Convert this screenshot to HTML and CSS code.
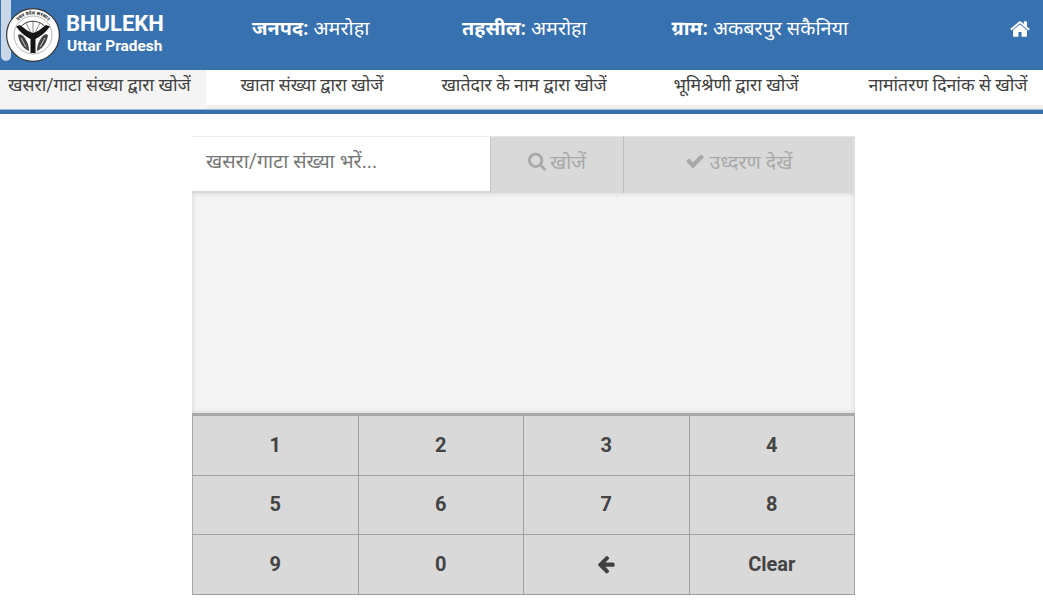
FILE: index.html
```html
<!DOCTYPE html>
<html lang="hi">
<head>
<meta charset="utf-8">
<title>Bhulekh</title>
<link rel="stylesheet" href="styles.css">
</head>
<body>
<header class="topbar">
  <span class="scroll-thumb"></span>
  <div class="brand">
    <svg class="logo" viewBox="0 0 54 54" aria-hidden="true">
      <defs><path id="ring" d="M7 32 A20.600 20.600 0 1 1 47 32"/></defs>
      <circle cx="27" cy="27" r="26.400" fill="#fff" stroke="#333" stroke-width="1.200"/>
      <circle cx="27" cy="27" r="19" fill="none" stroke="#666" stroke-width=".5"/>
      <text class="logo-text"><textPath href="#ring" startOffset="50%" text-anchor="middle">उत्तर प्रदेश सरकार</textPath></text>
      <path d="M14 20 C20 11 34 11 40 20" fill="none" stroke="#333" stroke-width="1"/>
      <path d="M27 13 L27 26 M20 15 L25 25 M34 15 L29 25" fill="none" stroke="#555" stroke-width=".7"/>
      <path d="M10 18.500 L14 17 C19 21 23 24 27 25 C31 24 35 21 40 17 L44 18.500 C39 25 34 29 29.500 31 L29.500 45 L24.500 45 L24.500 31 C20 29 15 25 10 18.500 Z" fill="#161616"/>
      <path d="M12 27 C15 25 18 28 20 32 C22 35 23 39 23 43 C18 41 13 35 12 27 Z M42 27 C39 25 36 28 34 32 C32 35 31 39 31 43 C36 41 41 35 42 27 Z" fill="#444"/>
      <path d="M15 30 L20 39 M39 30 L34 39" stroke="#e4e4e4" stroke-width=".8" fill="none"/>
    </svg>
    <div class="brand-text">
      <div class="brand-title">BHULEKH</div>
      <div class="brand-sub">Uttar Pradesh</div>
    </div>
  </div>
  <div class="info"><b>जनपद:</b> अमरोहा</div>
  <div class="info"><b>तहसील:</b> अमरोहा</div>
  <div class="info"><b>ग्राम:</b> अकबरपुर सकैनिया</div>
  <svg class="home" viewBox="0 0 1664 1792" aria-hidden="true"><path fill="#fff" d="M1408 992v480q0 26-19 45t-45 19h-384v-384h-256v384h-384q-26 0-45-19t-19-45v-480q0-1 .5-3t.5-3l575-474 575 474q1 2 1 6zm223-69l-62 74q-8 9-21 11h-3q-13 0-21-7l-692-577-692 577q-12 8-24 7-13-2-21-11l-62-74q-8-10-7-23.500t11-21.500l719-599q32-26 76-26t76 26l244 204v-195q0-14 9-23t23-9h192q14 0 23 9t9 23v408l219 182q10 8 11 21.500t-7 23.500z"/></svg>
</header>
<nav class="tabs">
  <a class="tab tab-active">खसरा/गाटा संख्या द्वारा खोजें</a>
  <a class="tab">खाता संख्या द्वारा खोजें</a>
  <a class="tab">खातेदार के नाम द्वारा खोजें</a>
  <a class="tab">भूमिश्रेणी द्वारा खोजें</a>
  <a class="tab">नामांतरण दिनांक से खोजें</a>
</nav>
<main class="panel">
  <div class="search-row">
    <div class="search-input">खसरा/गाटा संख्या भरें...</div>
    <div class="btn btn-search">
      <svg class="ic-search" viewBox="0 0 1664 1792" aria-hidden="true"><path fill="#a9a9a9" d="M1152 832q0-185-131.500-316.500t-316.500-131.500-316.500 131.500-131.500 316.500 131.500 316.500 316.500 131.500 316.500-131.500 131.500-316.500zm512 832q0 52-38 90t-90 38q-54 0-90-38l-343-342q-179 124-399 124-143 0-273.500-55.500t-225-150-150-225-55.500-273.500 55.500-273.500 150-225 225-150 273.500-55.500 273.500 55.500 225 150 150 225 55.500 273.500q0 220-124 399l343 343q37 37 37 90z"/></svg>
      <span>खोजें</span>
    </div>
    <div class="btn btn-view">
      <svg class="ic-check" viewBox="0 0 1792 1792" aria-hidden="true"><path fill="#a9a9a9" d="M1671 566q0 40-28 68l-724 724-136 136q-28 28-68 28t-68-28l-136-136-362-362q-28-28-28-68t28-68l136-136q28-28 68-28t68 28l294 295 656-657q28-28 68-28t68 28l136 136q28 28 28 68z"/></svg>
      <span>उध्दरण देखें</span>
    </div>
  </div>
  <div class="display"></div>
  <div class="keypad">
    <div class="key">1</div><div class="key">2</div><div class="key">3</div><div class="key">4</div>
    <div class="key">5</div><div class="key">6</div><div class="key">7</div><div class="key">8</div>
    <div class="key">9</div><div class="key">0</div>
    <div class="key"><svg class="ic-back" viewBox="0 0 1792 1792" aria-hidden="true"><path fill="#404040" d="M1664 896v128q0 53-32.500 90.500t-84.500 37.500h-704l293 294q38 36 38 90t-38 90l-75 76q-37 37-90 37-52 0-91-37l-651-652q-37-37-37-90 0-52 37-91l651-650q38-38 91-38 52 0 90 38l75 74q38 38 38 91t-38 91l-293 293h704q52 0 84.500 37.500t32.500 90.500z"/></svg></div>
    <div class="key">Clear</div>
  </div>
</main>
</body>
</html>
```
FILE: styles.css
```css
* { box-sizing: border-box; }
html, body { margin: 0; padding: 0; }
body {
  height: 609px;
  overflow: hidden;
  background: #fff;
  font-family: Roboto, "Noto Sans", sans-serif;
  color: #404040;
}
.topbar {
  position: relative;
  display: grid;
  grid-template-columns: 252px 210px 209.500px 1fr auto;
  height: 70px;
  padding-right: 13px;
  align-items: center;
  background: #3771b0;
  color: #fff;
}
.scroll-thumb {
  position: absolute;
  left: 1px;
  top: 0;
  width: 10px;
  height: 61px;
  border-radius: 0 0 5px 5px;
  background: #c9d8e9;
}
.brand {
  position: relative;
  display: flex;
  align-items: center;
  gap: 6px;
  padding: 0 0 0 6px;
}
.logo { width: 54px; height: 54px; flex: none; }
.logo-text { font-size: 4.800px; font-weight: 700; fill: #222; }
.brand-text { padding-bottom: 2px; }
.brand-title { font-size: 22px; font-weight: 700; line-height: 24px; }
.brand-sub { font-size: 15.400px; font-weight: 700; line-height: 20px; padding-left: 1px; }
.info { font-size: 19.800px; white-space: nowrap; padding-bottom: 16px; }
.info b { font-weight: 700; }
.home { width: 20px; height: 22px; margin-bottom: 12px; }
.tabs {
  display: grid;
  grid-template-columns: 206px repeat(4, 212px);
  height: 44px;
  background: linear-gradient(#fff 35px, #f0f0f0 35px, #f0f0f0 39px, #9db9d7 39px);
  border-bottom: 4px solid #3771b0;
}
.tab {
  display: block;
  height: 35px;
  line-height: 31px;
  font-size: 17.700px;
  text-align: center;
  color: #404040;
  white-space: nowrap;
}
.tab-active { height: 39px; background: #f4f4f4; text-align: left; padding-left: 8px; }
.panel {
  width: 663px;
  margin: 22px 0 0 192px;
}
.search-row { display: grid; grid-template-columns: 299px 132px 232px; height: 57px; }
.search-input {
  padding-left: 14px;
  font-size: 19.800px;
  line-height: 50px;
  color: #777;
  background: #fff;
  border-top: 1px solid #eee;
  border-right: 1px solid #c8c8c8;
  border-bottom: 2px solid #d6d6d6;
}
.btn {
  display: flex;
  align-items: center;
  justify-content: center;
  gap: 4px;
  padding-bottom: 8px;
  font-size: 19.800px;
  color: #a9a9a9;
  background: #d9d9d9;
  border-top: 1px solid #e6e6e6;
}
.btn-view { border-left: 1px solid #bdbdbd; border-right: 2px solid #dedede; gap: 5px; }
.ic-search { width: 18px; height: 20px; }
.ic-check { width: 20px; height: 20px; }
.display {
  height: 220px;
  background: #f4f4f4;
  box-shadow: inset 0 0 5px #cfcfcf;
}
.keypad {
  display: grid;
  grid-template-columns: repeat(4, 1fr);
  grid-auto-rows: 59.500px;
  border-top: 3px solid #a9a9a9;
  border-left: 1px solid #a9a9a9;
}
.key {
  display: flex;
  align-items: center;
  justify-content: center;
  padding-bottom: 1px;
  font-size: 20px;
  font-weight: 700;
  color: #444;
  background: #d9d9d9;
  border-right: 1px solid #a0a0a0;
  border-bottom: 1px solid #a0a0a0;
}
.ic-back { width: 20px; height: 20px; }
```
